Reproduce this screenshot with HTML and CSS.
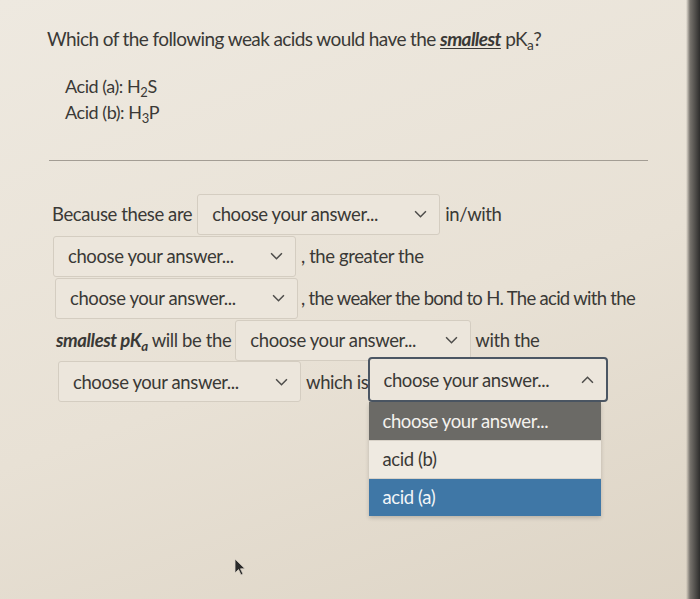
FILE: index.html
```html
<!DOCTYPE html>
<html lang="en">
<head>
  <meta charset="UTF-8">
  <meta name="viewport" content="width=device-width, initial-scale=1.0">
  <title>Weak acids – smallest pKa</title>
  <link rel="stylesheet" href="styles.css">
</head>
<body>
  <div class="screen">
    <div class="question">
      <p class="prompt">Which of the following weak acids would have the <span class="key">smallest</span> pK<sub>a</sub>?</p>
      <ul class="acids">
        <li>Acid (a): H<sub>2</sub>S</li>
        <li>Acid (b): H<sub>3</sub>P</li>
      </ul>
    </div>

    <hr class="rule">

    <div class="answer">
      <div class="row">
        <span>Because these are</span>
        <div class="select"><span>choose your answer...</span><svg class="chev" viewBox="0 0 12 7"><path d="M1 1l5 5 5-5"/></svg></div>
        <span>in/with</span>
      </div>
      <div class="row row-2">
        <div class="select"><span>choose your answer...</span><svg class="chev" viewBox="0 0 12 7"><path d="M1 1l5 5 5-5"/></svg></div>
        <span>, the greater the</span>
      </div>
      <div class="row row-3">
        <div class="select"><span>choose your answer...</span><svg class="chev" viewBox="0 0 12 7"><path d="M1 1l5 5 5-5"/></svg></div>
        <span class="long">, the weaker the bond to H. The acid with the</span>
      </div>
      <div class="row row-4">
        <span><b class="em">smallest pK<sub>a</sub></b> will be the</span>
        <div class="select narrow"><span>choose your answer...</span><svg class="chev" viewBox="0 0 12 7"><path d="M1 1l5 5 5-5"/></svg></div>
        <span>with the</span>
      </div>
      <div class="row row-5">
        <div class="select"><span>choose your answer...</span><svg class="chev" viewBox="0 0 12 7"><path d="M1 1l5 5 5-5"/></svg></div>
        <span class="tight">which is</span>
        <div class="select open">
          <span>choose your answer...</span><svg class="chev" viewBox="0 0 12 7"><path d="M1 6l5-5 5 5"/></svg>
          <ul class="options">
            <li class="placeholder">choose your answer...</li>
            <li>acid (b)</li>
            <li class="hover">acid (a)</li>
          </ul>
        </div>
      </div>
    </div>

    <svg class="cursor" viewBox="0 0 12 18"><path d="M1 1v14l3.5-3.5 2.5 5.5 2-1-2.5-5.2H11z"/></svg>
  </div>
</body>
</html>
```

FILE: styles.css
```css
html,
body {
  margin: 0;
  height: 100%;
}

body {
  font-family: Lato, "Open Sans", sans-serif;
  color: #3a3936;
  background:
    linear-gradient(to right, transparent 0, transparent 686px, #77736d 690px, #2d2c2b 700px),
    linear-gradient(160deg, #eee9e0 0%, #e8e1d5 55%, #ddd4c5 100%);
  overflow: hidden;
}

.screen {
  position: relative;
  height: 599px;
}

sub {
  font-size: 0.72em;
  vertical-align: -0.3em;
  line-height: 0;
}

.question {
  padding: 27px 0 0 47px;
}

.prompt {
  margin: 0;
  font-size: 19px;
  line-height: 24px;
  letter-spacing: -0.6px;
}

.key {
  font-weight: 700;
  font-style: italic;
  text-decoration: underline;
  text-underline-offset: 2px;
}

.acids {
  list-style: none;
  margin: 22px 0 0;
  padding: 0 0 0 18px;
  font-size: 18px;
  line-height: 26px;
  letter-spacing: -0.45px;
}

.rule {
  margin: 35px 52px 0 49px;
  border: 0;
  border-top: 1.5px solid #a39d94;
}

.answer {
  padding: 32px 0 0 52px;
  font-size: 18.5px;
  letter-spacing: -0.4px;
}

.row {
  display: flex;
  align-items: center;
  gap: 5px;
  height: 42px;
}

.row-2 { padding-left: 1px; }
.row-3 { padding-left: 3px; gap: 3px; }
.row-4 { padding-left: 4px; gap: 4px; }
.row-5 { padding-left: 6px; height: 41px; }

.long {
  letter-spacing: -0.7px;
}

.tight {
  margin-right: -5px;
}

.em {
  font-weight: 700;
  font-style: italic;
}

.select {
  position: relative;
  box-sizing: border-box;
  display: flex;
  align-items: center;
  justify-content: space-between;
  width: 243px;
  height: 41px;
  padding: 0 12px 0 14px;
  border: 1px solid #d4cdc1;
  border-radius: 3px;
  background: #ece6dc;
}

.select.narrow {
  width: 236px;
}

.chev {
  width: 13px;
  height: 8px;
  fill: none;
  stroke: #4d4c4a;
  stroke-width: 1.4;
}

.select.open {
  width: 240px;
  height: 45px;
  margin-top: -4px;
  border: 2px solid #4b5663;
  border-radius: 4px;
  padding-left: 13px;
}

.options {
  position: absolute;
  top: 43px;
  left: -1px;
  width: 232px;
  margin: 0;
  padding: 0;
  list-style: none;
  box-shadow: 0 2px 4px rgba(0, 0, 0, 0.18);
}

.options li {
  height: 37px;
  line-height: 37px;
  padding-left: 13px;
  background: #efeae1;
  border-bottom: 1px solid #d8d2c8;
}

.options .placeholder {
  background: #6b6a66;
  color: #f4f2ee;
  height: 38px;
  line-height: 38px;
}

.options .hover {
  background: #3f77a6;
  color: #f2f5f8;
  border-bottom: 0;
}

.cursor {
  position: absolute;
  left: 234px;
  top: 558px;
  width: 12px;
  height: 18px;
  fill: #2a2a2a;
  stroke: #ddd6ca;
  stroke-width: 0.8;
}
```
